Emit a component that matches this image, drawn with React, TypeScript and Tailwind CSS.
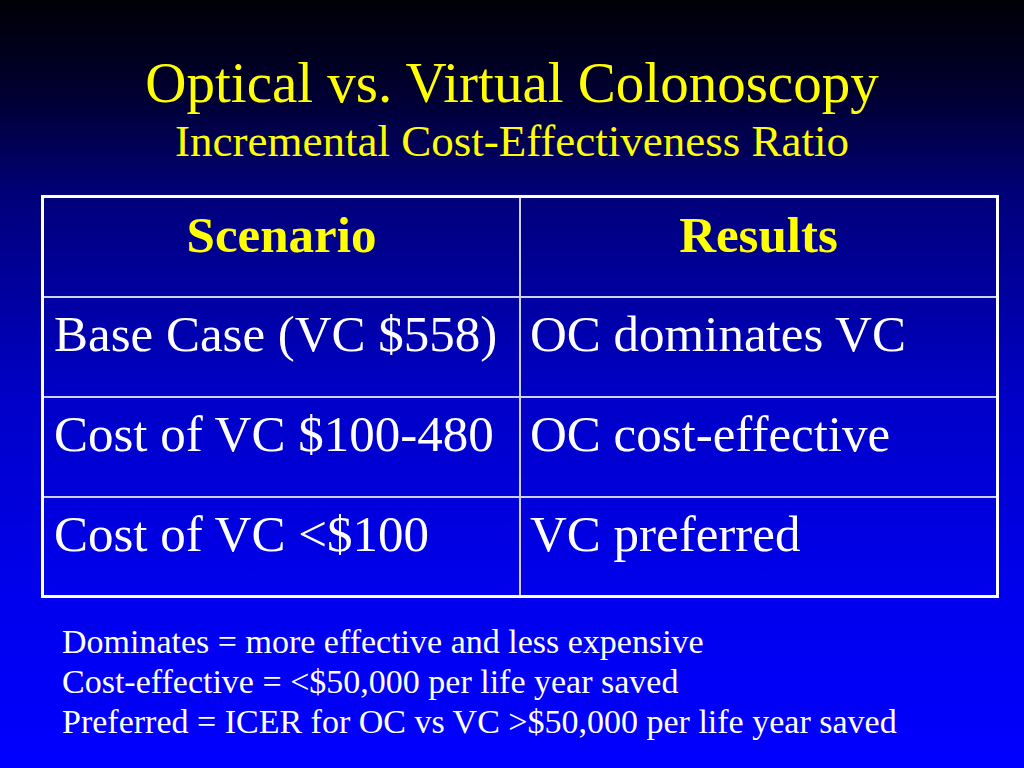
const rows = [
  ["Base Case (VC $558)", "OC dominates VC"],
  ["Cost of VC $100-480", "OC cost-effective"],
  ["Cost of VC <$100", "VC preferred"],
];

export default function App() {
  return (
    <div className="w-[1024px] h-[768px] overflow-hidden bg-[linear-gradient(to_bottom,#000006_0%,#000030_12%,#00007c_26%,#0000c8_52%,#0000ee_78%,#0000ff_100%)] font-['Liberation_Serif',serif]">
      <div className="pt-[53px] flex flex-col items-center text-[#ffff00]">
        <h1 className="text-[57px] leading-[60px]">Optical vs. Virtual Colonoscopy</h1>
        <p className="text-[45px] leading-[56px]">Incremental Cost-Effectiveness Ratio</p>
      </div>

      <div className="mt-[26px] ml-[41px] w-[958px] border-[3px] border-white grid grid-cols-[477px_1fr]">
        <div className="h-[100px] border-r-2 border-b-2 border-[#d0d0ec] text-center pt-[7px] text-[51px] leading-[60px] font-bold text-[#ffff00]">
          Scenario
        </div>
        <div className="h-[100px] border-b-2 border-[#d0d0ec] text-center pt-[7px] text-[51px] leading-[60px] font-bold text-[#ffff00]">
          Results
        </div>
        {rows.map((r, i) => (
          <>
            <div
              key={"a" + i}
              className={
                "border-r-2 border-[#d0d0ec] pl-[10px] pt-[6px] text-[51px] leading-[60px] text-white whitespace-nowrap " +
                (i < 2 ? "h-[100px] border-b-2" : "h-[97px]")
              }
            >
              {r[0]}
            </div>
            <div
              key={"b" + i}
              className={
                "border-[#d0d0ec] pl-[9px] pt-[6px] text-[51px] leading-[60px] text-white whitespace-nowrap " +
                (i < 2 ? "h-[100px] border-b-2" : "h-[97px]")
              }
            >
              {r[1]}
            </div>
          </>
        ))}
      </div>

      <div className="mt-[24px] ml-[62px] text-white text-[34px] leading-[40px]">
        <p>Dominates = more effective and less expensive</p>
        <p>Cost-effective = &lt;$50,000 per life year saved</p>
        <p>Preferred = ICER for OC vs VC &gt;$50,000 per life year saved</p>
      </div>
    </div>
  );
}
